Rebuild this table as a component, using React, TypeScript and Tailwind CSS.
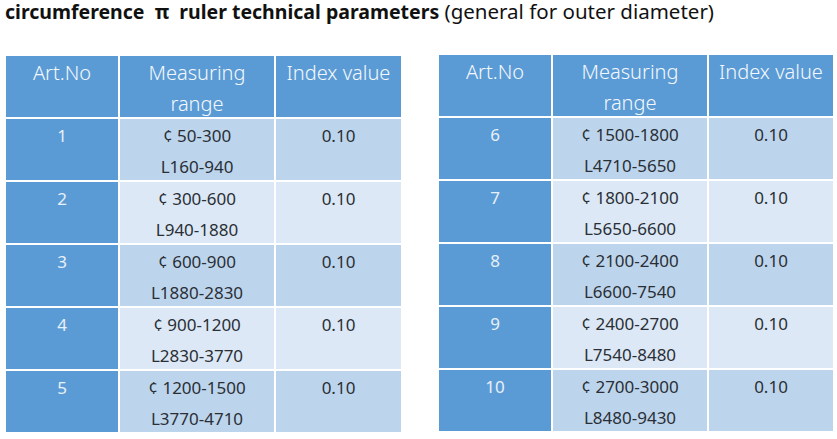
import React from "react";

type Row = { no: string; d: string; l: string; v: string };

const left: Row[] = [
  { no: "1", d: "¢ 50-300", l: "L160-940", v: "0.10" },
  { no: "2", d: "¢ 300-600", l: "L940-1880", v: "0.10" },
  { no: "3", d: "¢ 600-900", l: "L1880-2830", v: "0.10" },
  { no: "4", d: "¢ 900-1200", l: "L2830-3770", v: "0.10" },
  { no: "5", d: "¢ 1200-1500", l: "L3770-4710", v: "0.10" },
];
const right: Row[] = [
  { no: "6", d: "¢ 1500-1800", l: "L4710-5650", v: "0.10" },
  { no: "7", d: "¢ 1800-2100", l: "L5650-6600", v: "0.10" },
  { no: "8", d: "¢ 2100-2400", l: "L6600-7540", v: "0.10" },
  { no: "9", d: "¢ 2400-2700", l: "L7540-8480", v: "0.10" },
  { no: "10", d: "¢ 2700-3000", l: "L8480-9430", v: "0.10" },
];

function Table({ rows, cols }: { rows: Row[]; cols: string }) {
  return (
    <div className={`grid ${cols} gap-[2px] bg-white`}>
      <div className="h-[61px] bg-[#5b9bd5] pt-[1px] text-center text-[20px] font-light leading-[31px] text-[#f4f8fc]">
        Art.No
      </div>
      <div className="h-[61px] bg-[#5b9bd5] pt-[1px] text-center text-[20px] font-light leading-[31px] text-[#f4f8fc]">
        Measuring
        <br />
        range
      </div>
      <div className="h-[61px] bg-[#5b9bd5] pt-[1px] text-center text-[20px] font-light leading-[31px] text-[#f4f8fc]">
        Index value
      </div>
      {rows.map((r, i) => {
        const bg = i % 2 === 0 ? "bg-[#bdd5ec]" : "bg-[#dce8f5]";
        return (
          <React.Fragment key={r.no}>
            <div className="h-[61px] bg-[#5b9bd5] pt-[1px] text-center text-[17px] leading-[31px] text-[#e8f0f9]">
              {r.no}
            </div>
            <div className={`h-[61px] ${bg} pt-[1px] text-center text-[17px] leading-[31px] text-[#2a2f36]`}>
              {r.d}
              <br />
              {r.l}
            </div>
            <div className={`h-[61px] ${bg} pt-[1px] text-center text-[17px] leading-[31px] text-[#2a2f36]`}>
              {r.v}
            </div>
          </React.Fragment>
        );
      })}
    </div>
  );
}

export default function App() {
  return (
    <div className="h-[439px] w-[837px] overflow-hidden bg-white font-['Noto_Sans','Noto_Sans_CJK_SC',sans-serif]">
      <div className="h-[22px] pt-[1px] pl-[5px] leading-[20px] whitespace-pre text-[#111]">
        <span className="text-[19.5px] font-bold">{"circumference  π  ruler technical parameters"}</span>
        <span className="text-[20.5px]">{" (general for outer diameter)"}</span>
      </div>
      <div className="mt-[34px] flex items-start pl-[6px]">
        <Table rows={left} cols="grid-cols-[112px_154px_125px]" />
        <div className="ml-[38px] -mt-[1px]">
          <Table rows={right} cols="grid-cols-[112px_154px_124px]" />
        </div>
      </div>
    </div>
  );
}
